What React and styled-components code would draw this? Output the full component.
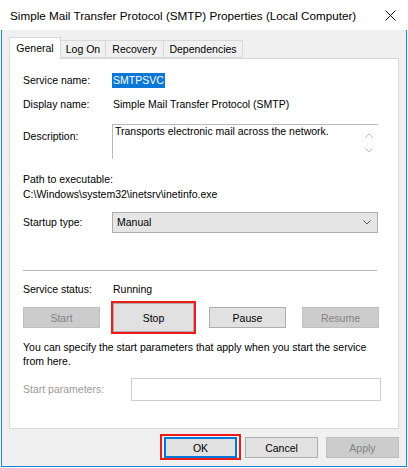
import React from 'react';
import styled, { createGlobalStyle } from 'styled-components';

const GlobalStyle = createGlobalStyle`
  html, body {
    margin: 0;
    padding: 0;
    background: #ffffff;
  }
  body {
    font-family: "Liberation Sans", Arial, sans-serif;
    font-size: 10.5px;
    color: #000;
  }
  * {
    box-sizing: border-box;
  }
`;

const Window = styled.div`
  width: 408px;
  height: 468px;
  display: flex;
  flex-direction: column;
  background: #fff;
`;

const TitleBar = styled.div`
  height: 30px;
  display: flex;
  align-items: center;
  justify-content: space-between;
  padding: 0 12px 0 10px;
  background: #fff;
`;

const Title = styled.span`
  font-size: 11.7px;
  color: #000;
  white-space: nowrap;
`;

const CloseIcon = () => (
  <svg width="11" height="11" viewBox="0 0 11 11">
    <path d="M0.5 0.5 L10.5 10.5 M10.5 0.5 L0.5 10.5" stroke="#111" strokeWidth="1" fill="none" />
  </svg>
);

const Body = styled.div`
  width: 406px;
  height: 437px;
  margin-left: 1px;
  background: #f0f0f0;
  border: 1px solid #1883d7;
  border-top: none;
  padding: 7px 7px 8px 7px;
  display: flex;
  flex-direction: column;
`;

const TabRow = styled.div`
  display: flex;
  align-items: flex-end;
  height: 21px;
`;

const Tab = styled.div`
  position: relative;
  width: ${({ $w }) => $w}px;
  height: ${({ $active }) => ($active ? 22 : 18)}px;
  margin-bottom: ${({ $active }) => ($active ? -1 : 0)}px;
  margin-left: ${({ $first }) => ($first ? 0 : -1)}px;
  z-index: ${({ $active }) => ($active ? 2 : 1)};
  background: ${({ $active }) => ($active ? '#ffffff' : '#f0f0f0')};
  border: 1px solid #d9d9d9;
  border-bottom: ${({ $active }) => ($active ? 'none' : '1px solid #d9d9d9')};
  display: flex;
  align-items: ${({ $active }) => ($active ? 'flex-start' : 'center')};
  padding-top: ${({ $active }) => ($active ? 3 : 0)}px;
  justify-content: center;
  line-height: 15px;
  white-space: nowrap;
`;

const Panel = styled.div`
  height: 371px;
  background: #fff;
  border: 1px solid #d9d9d9;
  padding: 14px 19px 0 13px;
  display: flex;
  flex-direction: column;
`;

const Row = styled.div`
  display: flex;
  align-items: ${({ $top }) => ($top ? 'flex-start' : 'center')};
  margin-top: ${({ $mt }) => $mt || 0}px;
  min-height: ${({ $h }) => $h || 15}px;
  line-height: 15px;
`;

const Label = styled.div`
  width: ${({ $w }) => $w || 89}px;
  flex-shrink: 0;
  color: ${({ $disabled }) => ($disabled ? '#9a9a9a' : '#000')};
  padding-top: ${({ $pt }) => $pt || 0}px;
  white-space: nowrap;
`;

const Value = styled.div`
  padding-left: 1px;
  white-space: nowrap;
`;

const Selected = styled.span`
  background: #0a78d7;
  color: #fff;
  padding: 0 1px;
  line-height: 15px;
  display: inline-block;
`;

const TextBox = styled.div`
  width: 266px;
  height: 35px;
  display: flex;
  border-top: 1px solid #b9b9b9;
  border-left: 1px solid #b9b9b9;
  background: #fff;
`;

const TextContent = styled.div`
  flex: 1;
  padding: 0 2px;
  line-height: 12px;
  white-space: nowrap;
`;

const ScrollBar = styled.div`
  width: 14px;
  display: flex;
  flex-direction: column;
  justify-content: space-between;
  align-items: center;
  padding: 8px 4px 6px 0;
`;

const Chevron = ({ up, color = '#bdbdbd', w = 8 }) => (
  <svg width={w} height="5" viewBox="0 0 8 5">
    <path
      d={up ? 'M0.5 4.5 L4 1 L7.5 4.5' : 'M0.5 0.5 L4 4 L7.5 0.5'}
      stroke={color}
      strokeWidth="1"
      fill="none"
    />
  </svg>
);

const Path = styled.div`
  line-height: 15px;
  white-space: nowrap;
`;

const Select = styled.div`
  width: 266px;
  height: 21px;
  background: #e5e5e5;
  border: 1px solid #acacac;
  display: flex;
  align-items: center;
  justify-content: space-between;
  padding: 0 6px 0 4px;
`;

const Separator = styled.div`
  height: 1px;
  margin-top: ${({ $mt }) => $mt}px;
  margin-right: 2px;
  background: #b4b4b4;
`;

const ButtonGrid = styled.div`
  display: grid;
  grid-template-columns: repeat(4, 77px);
  grid-auto-rows: 21px;
  justify-content: space-between;
  margin-top: ${({ $mt }) => $mt}px;
`;

const Button = styled.div`
  position: relative;
  height: ${({ $marked }) => ($marked ? 29 : 21)}px;
  margin: ${({ $marked }) => ($marked ? '-4px -1px -4px -3px' : '0')};
  width: ${({ $w }) => ($w ? `${$w}px` : 'auto')};
  display: flex;
  align-items: center;
  justify-content: center;
  background: ${({ $disabled }) => ($disabled ? '#cccccc' : '#e1e1e1')};
  border: ${({ $default, $disabled }) =>
    $default ? '2px solid #0078d7' : `1px solid ${$disabled ? '#bfbfbf' : '#adadad'}`};
  color: ${({ $disabled }) => ($disabled ? '#838383' : '#000')};
  outline: ${({ $marked }) => ($marked ? '2px solid #ee1b1b' : 'none')};
`;

const RedFrame = styled.span`
  position: absolute;
  top: -5px;
  bottom: -4px;
  left: -6px;
  right: -6px;
  border: 2px solid #ee1b1b;
  pointer-events: none;
`;

const Note = styled.div`
  margin-top: ${({ $mt }) => $mt}px;
  line-height: 14px;
  white-space: nowrap;
`;

const Input = styled.div`
  flex: 1;
  height: 23px;
  margin-right: -2px;
  background: #fff;
  border: 1px solid #cccccc;
`;

const Footer = styled.div`
  display: flex;
  justify-content: flex-end;
  gap: 8px;
  margin-top: 8px;
`;

const tabs = [
  { name: 'General', w: 52, active: true },
  { name: 'Log On', w: 46 },
  { name: 'Recovery', w: 59 },
  { name: 'Dependencies', w: 80 },
];

export default function App() {
  return (
    <>
      <GlobalStyle />
      <Window>
        <TitleBar>
          <Title>Simple Mail Transfer Protocol (SMTP) Properties (Local Computer)</Title>
          <CloseIcon />
        </TitleBar>
        <Body>
          <TabRow>
            {tabs.map((t, i) => (
              <Tab key={t.name} $w={t.w} $active={t.active} $first={i === 0}>
                {t.name}
              </Tab>
            ))}
          </TabRow>
          <Panel>
            <Row>
              <Label>Service name:</Label>
              <Selected>SMTPSVC</Selected>
            </Row>
            <Row $mt={9}>
              <Label>Display name:</Label>
              <Value>Simple Mail Transfer Protocol (SMTP)</Value>
            </Row>
            <Row $mt={12} $top>
              <Label $pt={5}>Description:</Label>
              <TextBox>
                <TextContent>Transports electronic mail across the network.</TextContent>
                <ScrollBar>
                  <Chevron up />
                  <Chevron />
                </ScrollBar>
              </TextBox>
            </Row>
            <Path style={{ marginTop: 13 }}>Path to executable:</Path>
            <Path>C:\Windows\system32\inetsrv\inetinfo.exe</Path>
            <Row $mt={10} $h={21}>
              <Label>Startup type:</Label>
              <Select>
                <span>Manual</span>
                <Chevron color="#555" />
              </Select>
            </Row>
            <Separator $mt={37} />
            <Row $mt={11}>
              <Label>Service status:</Label>
              <Value>Running</Value>
            </Row>
            <ButtonGrid $mt={10}>
              <Button $disabled>Start</Button>
              <Button $marked>Stop</Button>
              <Button>Pause</Button>
              <Button $disabled>Resume</Button>
            </ButtonGrid>
            <Note $mt={12}>
              You can specify the start parameters that apply when you start the service
              <br />
              from here.
            </Note>
            <Row $mt={10} $h={23}>
              <Label $w={108} $disabled>Start parameters:</Label>
              <Input />
            </Row>
          </Panel>
          <Footer>
            <Button $w={73} $default>
              OK
              <RedFrame />
            </Button>
            <Button $w={73}>Cancel</Button>
            <Button $w={73} $disabled>Apply</Button>
          </Footer>
        </Body>
      </Window>
    </>
  );
}
